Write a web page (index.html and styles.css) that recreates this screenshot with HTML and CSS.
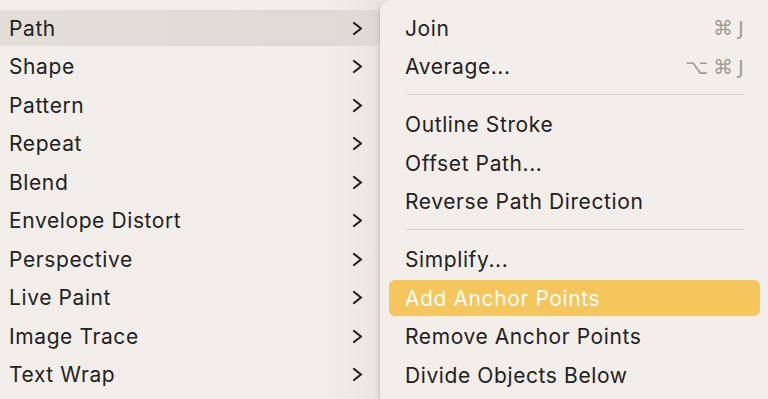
FILE: index.html
```html
<!DOCTYPE html>
<html>
<head>
<meta charset="utf-8">
<link rel="stylesheet" href="styles.css">
</head>
<body>
<div class="screen">
  <div class="menu">
    <div class="item active"><span>Path</span><svg class="chev" viewBox="0 0 11 15"><polyline points="2,2 9,7.5 2,13"/></svg></div>
    <div class="item"><span>Shape</span><svg class="chev" viewBox="0 0 11 15"><polyline points="2,2 9,7.5 2,13"/></svg></div>
    <div class="item"><span>Pattern</span><svg class="chev" viewBox="0 0 11 15"><polyline points="2,2 9,7.5 2,13"/></svg></div>
    <div class="item"><span>Repeat</span><svg class="chev" viewBox="0 0 11 15"><polyline points="2,2 9,7.5 2,13"/></svg></div>
    <div class="item"><span>Blend</span><svg class="chev" viewBox="0 0 11 15"><polyline points="2,2 9,7.5 2,13"/></svg></div>
    <div class="item"><span>Envelope Distort</span><svg class="chev" viewBox="0 0 11 15"><polyline points="2,2 9,7.5 2,13"/></svg></div>
    <div class="item"><span>Perspective</span><svg class="chev" viewBox="0 0 11 15"><polyline points="2,2 9,7.5 2,13"/></svg></div>
    <div class="item"><span>Live Paint</span><svg class="chev" viewBox="0 0 11 15"><polyline points="2,2 9,7.5 2,13"/></svg></div>
    <div class="item"><span>Image Trace</span><svg class="chev" viewBox="0 0 11 15"><polyline points="2,2 9,7.5 2,13"/></svg></div>
    <div class="item"><span>Text Wrap</span><svg class="chev" viewBox="0 0 11 15"><polyline points="2,2 9,7.5 2,13"/></svg></div>
  </div>
  <div class="submenu">
    <div class="sitem"><span>Join</span><span class="key">⌘J</span></div>
    <div class="sitem"><span>Average...</span><span class="key">⌥⌘J</span></div>
    <div class="sep"></div>
    <div class="sitem"><span>Outline Stroke</span></div>
    <div class="sitem"><span>Offset Path...</span></div>
    <div class="sitem"><span>Reverse Path Direction</span></div>
    <div class="sep"></div>
    <div class="sitem"><span>Simplify...</span></div>
    <div class="sitem selected"><span>Add Anchor Points</span></div>
    <div class="sitem"><span>Remove Anchor Points</span></div>
    <div class="sitem"><span>Divide Objects Below</span></div>
  </div>
</div>
</body>
</html>
```

FILE: styles.css
```css
* { box-sizing: border-box; }
html, body {
  margin: 0;
  padding: 0;
  width: 768px;
  height: 399px;
  overflow: hidden;
  background: #f2efea;
}
.screen {
  display: flex;
  width: 768px;
  height: 399px;
  font-family: "Inter", "Liberation Sans", sans-serif;
  font-size: 21px;
  letter-spacing: 0.6px;
  color: #222120;
}
.menu {
  width: 380px;
  flex: none;
  padding-top: 10px;
  background: linear-gradient(to right, #f2efea 0, #f1eee9 330px, #e9e6e0 380px);
}
.item {
  height: 36px;
  margin-bottom: 2.5px;
  display: flex;
  align-items: center;
  justify-content: space-between;
  padding: 0 17px 0 9px;
  border-radius: 0 6px 6px 0;
}
.item.active {
  background: linear-gradient(to right, #e2dfd9, #dedbd4);
}
.chev {
  width: 11px;
  height: 15px;
  fill: none;
  stroke: #222120;
  stroke-width: 2.2;
  stroke-linecap: round;
  stroke-linejoin: round;
}
.submenu {
  flex: 1;
  background: #f2eee9;
  border-top-left-radius: 11px;
  box-shadow: -2px 0 6px rgba(0,0,0,0.10), -1px 0 0 rgba(0,0,0,0.06);
  padding: 10px 8px 0 9px;
}
.sitem {
  height: 36px;
  margin-bottom: 2.5px;
  display: flex;
  align-items: center;
  justify-content: space-between;
  padding: 0 16px 0 16px;
  border-radius: 6px;
}
.sitem.selected {
  background: #f4c65b;
  color: #ffffff;
}
.key {
  color: #a19d98;
  letter-spacing: 5px;
  margin-right: -5px;
  font-family: "DejaVu Sans", sans-serif;
  font-size: 20px;
}
.sep {
  height: 19.5px;
  margin-top: -2.5px;
  margin-bottom: 2.5px;
  display: flex;
  align-items: center;
  padding: 0 16px;
}
.sep::before {
  content: "";
  flex: 1;
  height: 1px;
  background: #d9d5cf;
}
```
